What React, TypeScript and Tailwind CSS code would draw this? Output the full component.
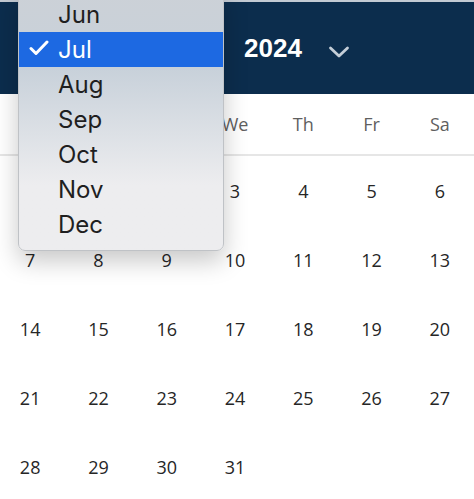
const months = ["Jun", "Jul", "Aug", "Sep", "Oct", "Nov", "Dec"];
const weekdays = ["Su", "Mo", "Tu", "We", "Th", "Fr", "Sa"];

// July 2024 starts on a Monday
const cells: (number | null)[] = [null, ...Array.from({ length: 31 }, (_, i) => i + 1)];

function MonthMenu() {
  return (
    <div className="absolute left-[18px] top-[-10px] w-[206px] rounded-b-[7px] border border-[#bfc2c6] bg-linear-to-b from-[#ccd1d7] via-[#c8d1da] via-30% to-[#ededef] to-75% pt-[6px] pb-[8px] shadow-[0_10px_24px_rgba(0,0,0,0.22)] font-['Inter',sans-serif]">
      {months.map((m) => {
        const selected = m === "Jul";
        return (
          <div
            key={m}
            className={`relative flex h-[35px] items-center pl-[39px] text-[24px] leading-none ${
              selected ? "bg-[#1d69e2] text-white" : "text-[#1f1f1f]"
            }`}
          >
            {selected && (
              <svg
                className="absolute left-[10px] top-[8px]"
                width="20"
                height="16"
                viewBox="0 0 20 16"
                fill="none"
              >
                <path
                  d="M2 8.5 L7 13.5 L18 2"
                  stroke="white"
                  strokeWidth="3"
                  strokeLinecap="round"
                  strokeLinejoin="round"
                />
              </svg>
            )}
            {m}
          </div>
        );
      })}
    </div>
  );
}

export default function App() {
  return (
    <div className="relative h-[499px] w-[474px] overflow-hidden bg-white">
      <div className="h-[2px] bg-[#c3cad3]" />
      <div className="flex h-[92px] items-center bg-[#0c2d4d] pl-[244px]">
        <span className="font-['Liberation_Sans',sans-serif] text-[26px] font-bold text-white">
          2024
        </span>
        <svg
          className="ml-[26px] mt-[8px]"
          width="22"
          height="14"
          viewBox="0 0 22 14"
          fill="none"
        >
          <path
            d="M2.5 3 L11 11 L19.5 3"
            stroke="#c5ced8"
            strokeWidth="2.8"
            strokeLinecap="round"
            strokeLinejoin="round"
          />
        </svg>
      </div>

      <div className="ml-[-4px] w-[478px] font-['Open_Sans',sans-serif]">
        <div className="grid h-[60px] grid-cols-7 items-center text-[18px] text-[#5f5f5f]">
          {weekdays.map((d) => (
            <div key={d} className="text-center">
              {d}
            </div>
          ))}
        </div>
        <div className="ml-[4px] h-[2px] w-[474px] bg-[#e6e6e6]" />
        <div className="grid grid-cols-7 pt-[1px] text-[18px] text-[#262626]">
          {cells.map((n, i) => (
            <div key={i} className="flex h-[69px] items-center justify-center">
              {n}
            </div>
          ))}
        </div>
      </div>

      <MonthMenu />
    </div>
  );
}
